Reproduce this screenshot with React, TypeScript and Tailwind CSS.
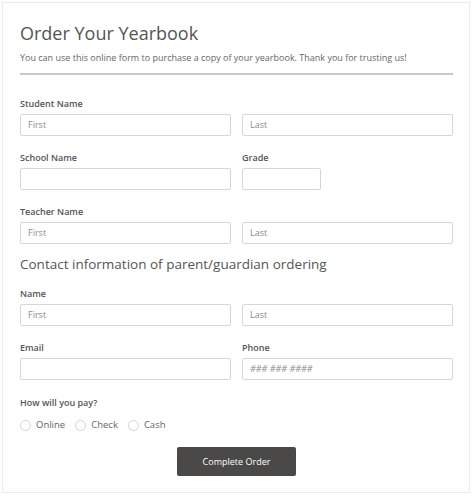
import React from "react";

const font = { fontFamily: '"Open Sans", "Noto Sans", sans-serif' };

function Label({ children }: { children: React.ReactNode }) {
  return (
    <div className="text-[9px] leading-[14px] font-semibold text-[#555] mb-[3px]">
      {children}
    </div>
  );
}

function Field({ placeholder = "", className = "" }: { placeholder?: string; className?: string }) {
  return (
    <div
      className={`h-[22px] border border-[#d6d6d6] rounded-[2px] bg-white flex items-center px-[7px] text-[9px] text-[#8a8a8a] ${className}`}
    >
      {placeholder}
    </div>
  );
}

function Radio({ label }: { label: string }) {
  return (
    <div className="flex items-center gap-[5px]">
      <span className="w-[11px] h-[11px] rounded-full border border-[#d4d4d4] bg-white" />
      <span className="text-[9.5px] leading-[14px] text-[#666]">{label}</span>
    </div>
  );
}

export default function App() {
  return (
    <div className="w-[474px] h-[496px] bg-white p-[2px]" style={font}>
      <div className="w-[468px] h-[491px] border border-[#ececec] pl-[17px] pr-[16px] pt-[17px]">
        <h1 className="text-[18px] leading-[26px] text-[#555] font-normal">Order Your Yearbook</h1>
        <p className="text-[9px] leading-[14px] text-[#666] mt-[5px]">
          You can use this online form to purchase a copy of your yearbook. Thank you for trusting us!
        </p>
        <div className="h-[2px] bg-[#c8c8c8] mt-[8px] mb-[22px]" />

        <Label>Student Name</Label>
        <div className="grid grid-cols-2 gap-[11px]">
          <Field placeholder="First" />
          <Field placeholder="Last" />
        </div>

        <div className="grid grid-cols-2 gap-[11px] mt-[15px]">
          <div>
            <Label>School Name</Label>
            <Field />
          </div>
          <div>
            <Label>Grade</Label>
            <Field className="w-[79px]" />
          </div>
        </div>

        <div className="mt-[15px]">
          <Label>Teacher Name</Label>
          <div className="grid grid-cols-2 gap-[11px]">
            <Field placeholder="First" />
            <Field placeholder="Last" />
          </div>
        </div>

        <h2 className="text-[13.5px] leading-[20px] text-[#555] mt-[10px]">
          Contact information of parent/guardian ordering
        </h2>

        <div className="mt-[13px]">
          <Label>Name</Label>
          <div className="grid grid-cols-2 gap-[11px]">
            <Field placeholder="First" />
            <Field placeholder="Last" />
          </div>
        </div>

        <div className="grid grid-cols-2 gap-[11px] mt-[15px]">
          <div>
            <Label>Email</Label>
            <Field />
          </div>
          <div>
            <Label>Phone</Label>
            <Field placeholder="### ### ####" className="italic" />
          </div>
        </div>

        <div className="mt-[16px]">
          <Label>How will you pay?</Label>
          <div className="flex gap-[10px] mt-[8px]">
            <Radio label="Online" />
            <Radio label="Check" />
            <Radio label="Cash" />
          </div>
        </div>

        <div className="flex justify-center mt-[15px]">
          <button className="w-[119px] h-[29px] bg-[#4a4948] rounded-[2px] text-white text-[9px]">
            Complete Order
          </button>
        </div>
      </div>
    </div>
  );
}
